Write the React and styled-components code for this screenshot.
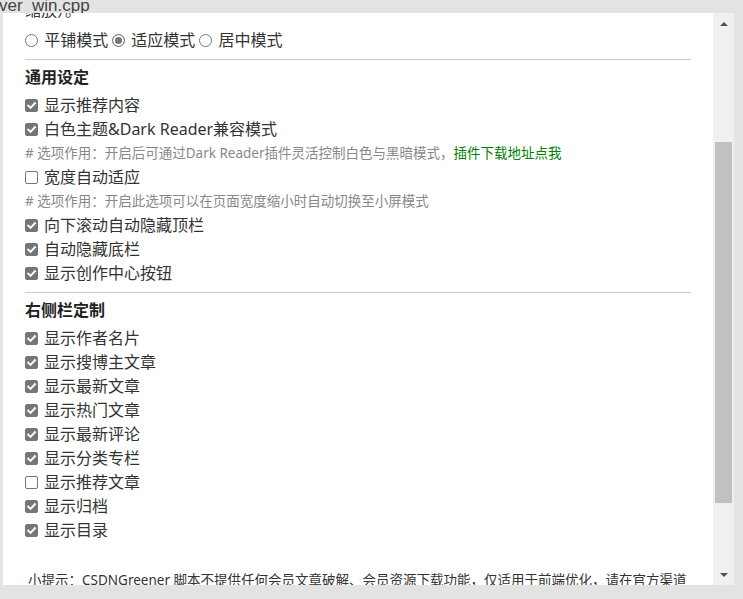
import React from 'react'
import styled, { createGlobalStyle } from 'styled-components'

const GlobalStyle = createGlobalStyle`
  html, body {
    margin: 0;
    padding: 0;
    background: #e3e3e3;
  }
  body {
    font-family: "Noto Sans", "Noto Sans CJK SC", sans-serif;
    color: #333;
  }
`

const generalOptions = [
  { label: '显示推荐内容', checked: true },
  { label: '白色主题&Dark Reader兼容模式', checked: true },
  { hint: '# 选项作用：开启后可通过Dark Reader插件灵活控制白色与黑暗模式，', link: '插件下载地址点我' },
  { label: '宽度自动适应', checked: false },
  { hint: '# 选项作用：开启此选项可以在页面宽度缩小时自动切换至小屏模式' },
  { label: '向下滚动自动隐藏顶栏', checked: true },
  { label: '自动隐藏底栏', checked: true },
  { label: '显示创作中心按钮', checked: true },
]

const sidebarOptions = [
  { label: '显示作者名片', checked: true },
  { label: '显示搜博主文章', checked: true },
  { label: '显示最新文章', checked: true },
  { label: '显示热门文章', checked: true },
  { label: '显示最新评论', checked: true },
  { label: '显示分类专栏', checked: true },
  { label: '显示推荐文章', checked: false },
  { label: '显示归档', checked: true },
  { label: '显示目录', checked: true },
]

const Checkbox = ({ checked }) => (
  <Box $checked={checked}>
    {checked && (
      <svg width="11" height="11" viewBox="0 0 11 11">
        <path d="M2.2 5.6 L4.5 7.9 L8.9 3.2" fill="none" stroke="#fff" strokeWidth="2" strokeLinecap="square" />
      </svg>
    )}
  </Box>
)

const OptionList = ({ items }) =>
  items.map((item, i) =>
    item.hint ? (
      <Hint key={i}>
        {item.hint}
        {item.link && <HintLink>{item.link}</HintLink>}
      </Hint>
    ) : (
      <Row key={i}>
        <Checkbox checked={item.checked} />
        {item.label}
      </Row>
    )
  )

const App = () => {
  return (
    <Page>
      <GlobalStyle />
      <BehindTitle>ver_win.cpp</BehindTitle>
      <Modal>
        <Viewport>
          <Content>
            <ClippedLine>缩放）。</ClippedLine>
            <RadioRow>
              <RadioItem><Radio /> 平铺模式</RadioItem>
              <RadioItem><Radio $checked /> 适应模式</RadioItem>
              <RadioItem><Radio /> 居中模式</RadioItem>
            </RadioRow>
            <Divider />
            <SectionTitle>通用设定</SectionTitle>
            <OptionList items={generalOptions} />
            <Divider />
            <SectionTitle>右侧栏定制</SectionTitle>
            <OptionList items={sidebarOptions} />
            <Tip>小提示：CSDNGreener 脚本不提供任何会员文章破解、会员资源下载功能，仅适用于前端优化，请在官方渠道</Tip>
          </Content>
        </Viewport>
        <ScrollBar>
          <Arrow $dir="up" />
          <Track>
            <Thumb />
          </Track>
          <Arrow $dir="down" />
        </ScrollBar>
      </Modal>
    </Page>
  )
}

export default App

const Page = styled.div`
  position: relative;
  width: 743px;
  height: 599px;
  overflow: hidden;
  padding-top: 13px;
  box-sizing: border-box;
`

const BehindTitle = styled.div`
  position: absolute;
  top: -3px;
  left: -1px;
  font-family: "Liberation Sans", Arial, sans-serif;
  font-size: 17px;
  line-height: 18px;
  color: #444;
`

const Modal = styled.div`
  position: relative;
  margin-left: 3px;
  width: 731px;
  height: 572px;
  display: flex;
  background: #fff;
`

const Viewport = styled.div`
  flex: 1;
  overflow: hidden;
`

const Content = styled.div`
  margin-top: -15px;
  padding: 0 22px;
  font-size: 16px;
  line-height: 24px;
  color: #333;
`

const ClippedLine = styled.div`
  height: 24px;
`

const RadioRow = styled.div`
  display: flex;
  align-items: center;
  gap: 4px;
  margin-top: 6px;
  height: 24px;
`

const RadioItem = styled.label`
  display: flex;
  align-items: center;
  white-space: pre;
`

const Radio = styled.span`
  width: 13px;
  height: 13px;
  box-sizing: border-box;
  border-radius: 50%;
  border: 1px solid #767676;
  background: ${p => (p.$checked ? '#767676' : '#fff')};
  box-shadow: ${p => (p.$checked ? 'inset 0 0 0 2px #fff' : 'none')};
  margin-right: 2px;
`

const Divider = styled.hr`
  border: 0;
  border-top: 1px solid #ccc;
  margin: 7px 0 5px;
`

const SectionTitle = styled.div`
  font-weight: bold;
  font-size: 16px;
  color: #222;
  margin-bottom: 4px;
`

const Row = styled.label`
  display: flex;
  align-items: center;
  height: 24px;
  gap: 6px;
`

const Box = styled.span`
  width: 13px;
  height: 13px;
  box-sizing: border-box;
  border-radius: 2px;
  display: flex;
  align-items: center;
  justify-content: center;
  background: ${p => (p.$checked ? '#767676' : '#fff')};
  border: 1px solid #767676;
`

const Hint = styled.div`
  height: 24px;
  font-size: 13.5px;
  color: #888;
`

const HintLink = styled.span`
  color: #008000;
`

const Tip = styled.div`
  margin-top: 26px;
  font-size: 13.5px;
  padding-left: 3px;
`

const ScrollBar = styled.div`
  width: 21px;
  display: flex;
  flex-direction: column;
  background: #f0f0f0;
`

const Arrow = styled.div`
  height: 21px;
  display: flex;
  align-items: center;
  justify-content: center;
  &::after {
    content: '';
    border-left: 4px solid transparent;
    border-right: 4px solid transparent;
    ${p =>
      p.$dir === 'up'
        ? 'border-bottom: 4px solid #505050;'
        : 'border-top: 4px solid #505050;'}
  }
`

const Track = styled.div`
  flex: 1;
  padding: 108px 2px 61px;
`

const Thumb = styled.div`
  height: 100%;
  background: #c1c1c1;
`
